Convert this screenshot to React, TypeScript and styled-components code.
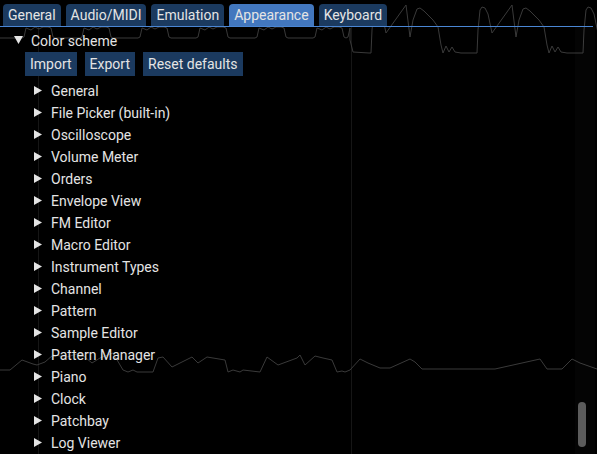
import React from "react";
import styled, { createGlobalStyle } from "styled-components";

const Global = createGlobalStyle`
  html, body { margin: 0; padding: 0; background: #000; }
  body { width: 597px; height: 454px; overflow: hidden; font-family: Roboto, "Noto Sans", sans-serif; }
`;

const Page = styled.div`
  position: relative;
  width: 597px;
  height: 454px;
  overflow: hidden;
  background: #000;
`;

const Scope = styled.svg`
  position: absolute;
  left: 0;
  top: 0;
  pointer-events: none;
`;

const Content = styled.div`
  position: relative;
  display: flex;
  flex-direction: column;
  padding-top: 4px;
`;

const TabBar = styled.div`
  display: flex;
  gap: 5px;
  padding-left: 3px;
  width: 590px;
  border-bottom: 1px solid #4a86d4;
`;

const Tab = styled.div<{ $active?: boolean }>`
  height: 22px;
  line-height: 23px;
  padding: 0 5px;
  box-sizing: border-box;
  border-radius: 4px 4px 0 0;
  background: ${(p) => (p.$active ? "#4277be" : "#1b3a5f")};
  color: #e4e4e4;
  font-size: 14px;
  white-space: nowrap;
`;

const Row = styled.div<{ $indent: number; $top?: number }>`
  display: flex;
  align-items: center;
  height: 22px;
  margin-top: ${(p) => p.$top ?? 0}px;
  padding-left: ${(p) => p.$indent}px;
  color: #e4e4e4;
  font-size: 14px;
  white-space: nowrap;
`;

const Label = styled.span`
  margin-top: 2px;
`;

const Arrow = styled.svg`
  flex: none;
  margin-right: 8px;
`;

const ButtonRow = styled.div`
  display: flex;
  gap: 8px;
  margin-top: 1px;
  margin-bottom: 3px;
  padding-left: 25px;
`;

const Button = styled.div`
  height: 24px;
  line-height: 25px;
  padding: 0 5px;
  background: #1b3a5f;
  color: #e4e4e4;
  font-size: 14px;
  white-space: nowrap;
`;

const ScrollTrack = styled.div`
  position: absolute;
  right: 2px;
  top: 27px;
  bottom: 0;
  width: 20px;
  background: rgba(255, 255, 255, 0.015);
`;

const ScrollGrab = styled.div`
  position: absolute;
  left: 3px;
  top: 375px;
  width: 8px;
  height: 45px;
  border-radius: 4px;
  background: #5c5c5c;
`;

const tabs = ["General", "Audio/MIDI", "Emulation", "Appearance", "Keyboard"];
const items = [
  "General",
  "File Picker (built-in)",
  "Oscilloscope",
  "Volume Meter",
  "Orders",
  "Envelope View",
  "FM Editor",
  "Macro Editor",
  "Instrument Types",
  "Channel",
  "Pattern",
  "Sample Editor",
  "Pattern Manager",
  "Piano",
  "Clock",
  "Patchbay",
  "Log Viewer",
];

const period: [number, number][] = [
  [0, 53], [1, 30], [3, 10], [5, 7], [8, 8], [11, 14], [15, 33], [35, 5], [39, 37],
  [42, 20], [46, 9], [49, 8], [53, 11], [62, 20], [67, 27], [70, 45], [72, 53],
  [75, 46], [78, 52], [81, 47], [84, 52], [90, 53],
];

function topWave(): string {
  const pts: string[] = [];
  const dips = [-6, 52, 110, 168, 227, 285, 343];
  dips.forEach((d, i) => {
    const end = i === dips.length - 1 ? 349 : d + 31;
    pts.push(`${d - 4},27`, `${d - 1},28`, `${d + 1},37`, `${d + 3},38`, `${end - 3},38`, `${end - 1},37`, `${end + 1},28`);
    if (i < dips.length - 1) {
      const m = end + 6;
      pts.push(`${m},30`, `${m + 4},27`, `${m + 8},29`, `${m + 12},27`);
    }
  });
  pts.push(`350,40`, `353,52`, `369,53`);
  [371, 477, 583].forEach((x0) => {
    period.forEach(([dx, y]) => pts.push(`${x0 + dx},${y}`));
  });
  return pts.join(" ");
}

const bottomWave = [
  [0, 370], [10, 370], [22, 360], [33, 364], [37, 365], [45, 362], [53, 355], [67, 357],
  [80, 353], [92, 363], [100, 358], [113, 353], [123, 370], [128, 372], [133, 370], [137, 372],
  [153, 372], [158, 358], [163, 357], [172, 367], [192, 357], [198, 363], [207, 357], [225, 360],
  [228, 372], [233, 370], [240, 372], [243, 370], [260, 372], [267, 357], [278, 365], [297, 358],
  [300, 355], [305, 365], [315, 356], [323, 358], [332, 360], [337, 372], [342, 371], [345, 372],
  [350, 370], [360, 359], [368, 363], [380, 368], [390, 368], [410, 359], [415, 362], [422, 369],
  [495, 369], [540, 359], [547, 369], [562, 369], [572, 359], [580, 363], [597, 369],
]
  .map(([x, y]) => `${x},${y}`)
  .join(" ");

const DownArrow = () => (
  <Arrow width="9" height="8" viewBox="0 0 9 8">
    <polygon points="0,0 9,0 4.5,8" fill="#e4e4e4" />
  </Arrow>
);

const RightArrow = () => (
  <Arrow width="9" height="9" viewBox="0 0 9 9">
    <polygon points="0,0 8,4.5 0,9" fill="#e4e4e4" />
  </Arrow>
);

export default function App() {
  return (
    <Page>
      <Global />
      <Scope width="597" height="454" viewBox="0 0 597 454">
        <line x1="38.5" y1="27" x2="38.5" y2="454" stroke="#161616" strokeWidth="1" />
        <line x1="351.5" y1="27" x2="351.5" y2="454" stroke="#161616" strokeWidth="1" />
        <polyline points={topWave()} fill="none" stroke="#3a3a3a" strokeWidth="1" strokeLinejoin="round" />
        <polyline points={bottomWave} fill="none" stroke="#3a3a3a" strokeWidth="1" strokeLinejoin="round" />
      </Scope>
      <ScrollTrack>
        <ScrollGrab />
      </ScrollTrack>
      <Content>
        <TabBar>
          {tabs.map((t) => (
            <Tab key={t} $active={t === "Appearance"}>
              {t}
            </Tab>
          ))}
        </TabBar>
        <Row $indent={14} $top={2}>
          <DownArrow />
          <Label>Color scheme</Label>
        </Row>
        <ButtonRow>
          <Button>Import</Button>
          <Button>Export</Button>
          <Button>Reset defaults</Button>
        </ButtonRow>
        {items.map((it) => (
          <Row key={it} $indent={34}>
            <RightArrow />
            <Label>{it}</Label>
          </Row>
        ))}
      </Content>
    </Page>
  );
}
